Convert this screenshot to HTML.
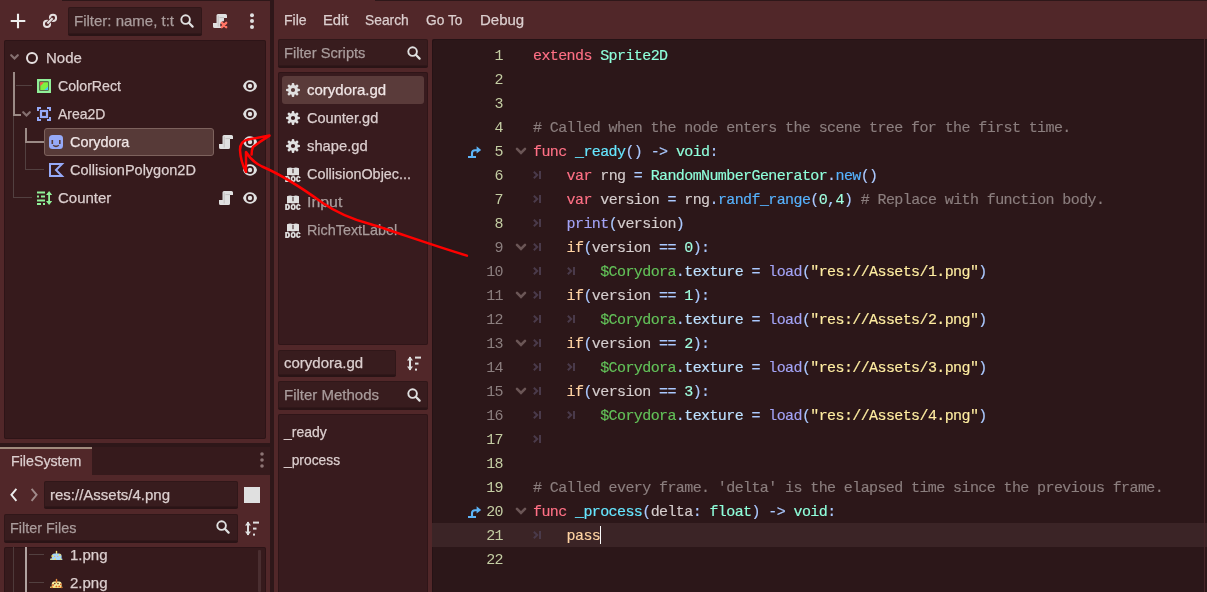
<!DOCTYPE html>
<html><head><meta charset="utf-8">
<style>
*{margin:0;padding:0;box-sizing:border-box}
html,body{width:1207px;height:592px;overflow:hidden;background:#512729}
body{position:relative;will-change:transform;font-family:"Liberation Sans",sans-serif;font-size:15px;color:#dccfcf}
.a{position:absolute}
.sep{background:#2e1719}
.panel{position:absolute;background:#361a1c;border-radius:2px;box-shadow:inset 0 0 0 1px rgba(20,5,6,0.25)}
.field{position:absolute;background:#381c1e;border-radius:2px;border-bottom:2px solid #2a1416;box-shadow:inset 0 0 0 1px rgba(20,5,6,0.2)}
.t{position:absolute;white-space:pre;line-height:16px;-webkit-text-stroke:0.25px currentColor}
.ph{color:#a99c9c}
svg{position:absolute;overflow:visible}
/* code */
.code{position:absolute;left:432px;top:39px;width:775px;height:553px;background:#2c1719;border-radius:2px 0 0 0;box-shadow:inset 1px 1px 0 rgba(10,2,3,0.2)}
.ln{position:absolute;left:0;width:71px;text-align:right;font-family:"Liberation Mono",monospace;font-size:15px;letter-spacing:-0.6px;line-height:24px;height:24px}
.cl{position:absolute;left:101px;font-family:"Liberation Mono",monospace;font-size:15px;letter-spacing:-0.6px;line-height:24px;height:24px;white-space:pre;color:#d5cdcd;-webkit-text-stroke:0.15px currentColor}
.safe{color:#c4cda3}
.uns{color:#8c7f7f}
.kw{color:#ff7085}.ty{color:#8fffdb}.cm{color:#8b7e7e}.fd{color:#66e6ff}.sy{color:#abc9ff}.fn{color:#57b3ff}.nu{color:#a1ffe0}.gf{color:#a3a3f5}.cf{color:#ffd3a3}.nr{color:#63c259}.mv{color:#bce0ff}.st{color:#ffeda1}
</style></head><body>

<svg width="0" height="0" style="position:absolute">
<defs>
<mask id="gm"><rect x="-1" y="-1" width="16" height="16" fill="#fff"/><circle cx="7" cy="7" r="2.1" fill="#000"/></mask>
<mask id="em"><rect x="-1" y="-1" width="16" height="14" fill="#fff"/><circle cx="7" cy="6" r="3.9" fill="#000"/></mask>
<symbol id="gear" viewBox="0 0 14 14"><g fill="#e0e0e0" mask="url(#gm)"><circle cx="7" cy="7" r="5"/><rect x="5.7" y="0" width="2.6" height="14" rx="1"/><rect x="5.7" y="0" width="2.6" height="14" rx="1" transform="rotate(45 7 7)"/><rect x="5.7" y="0" width="2.6" height="14" rx="1" transform="rotate(90 7 7)"/><rect x="5.7" y="0" width="2.6" height="14" rx="1" transform="rotate(135 7 7)"/></g></symbol>
<symbol id="eye" viewBox="0 0 14 12"><path d="M0 6 C2 -1.6 12 -1.6 14 6 C12 13.6 2 13.6 0 6Z" fill="#e0e0e0" mask="url(#em)"/><circle cx="7" cy="6" r="2.2" fill="#e0e0e0"/></symbol>
<symbol id="scr" viewBox="0 0 14 14"><path d="M5 0 H12.5 Q14 0 14 1.5 V4 H11 V12.5 Q11 14 9.5 14 H1.5 Q0 14 0 12.5 V9 H3.5 V1.5 Q3.5 0 5 0Z" fill="#e0e0e0"/><path d="M5.2 1.5 V12.5 M6.5 3.6 H11" stroke="#c4c0c0" stroke-width="1"/></symbol>
<symbol id="srch" viewBox="0 0 14 14"><circle cx="5.6" cy="5.6" r="4.3" fill="none" stroke="#e0e0e0" stroke-width="1.9"/><path d="M8.8 8.8 L12.6 12.6" stroke="#e0e0e0" stroke-width="2.2" stroke-linecap="round"/></symbol>
<symbol id="doc" viewBox="0 0 16 15"><path d="M2 1.3 Q5 -0.2 7.6 1 L8 1.6 L8.4 1 Q11 -0.2 14 1.3 V8.6 Q11 7.4 8.6 8.6 H7.4 Q5 7.4 2 8.6Z" fill="#e0e0e0"/><path d="M8 2 V6.2" stroke="#361a1c" stroke-width="1"/><path fill-rule="evenodd" fill="#e0e0e0" d="M0.2 9 H2.6 Q5 9 5 12 Q5 15 2.6 15 H0.2Z M1.9 10.6 V13.4 H2.4 Q3.2 13.4 3.2 12 Q3.2 10.6 2.4 10.6Z M8.2 9 A2.6 3 0 1 1 8.2 15 A2.6 3 0 1 1 8.2 9Z M8.2 10.6 A0.9 1.4 0 1 0 8.2 13.4 A0.9 1.4 0 1 0 8.2 10.6Z M15.8 10.8 Q15 9 13.4 9 Q11 9 11 12 Q11 15 13.4 15 Q15 15 15.8 13.2 L14.3 12.8 Q14 13.4 13.4 13.4 Q12.7 13.4 12.7 12 Q12.7 10.6 13.4 10.6 Q14 10.6 14.3 11.2Z"/></symbol>
<symbol id="sort" viewBox="0 0 15 15"><path d="M3 1 V14" stroke="#e0e0e0" stroke-width="2"/><path d="M0 4.5 L3 0.5 L6 4.5Z M0 10.5 L3 14.5 L6 10.5Z" fill="#e0e0e0"/><rect x="8" y="0.6" width="6" height="2" fill="#e0e0e0"/><rect x="8" y="6.6" width="3.5" height="2" fill="#e0e0e0"/><rect x="8" y="12.6" width="2" height="2" fill="#e0e0e0"/></symbol>
</defs></svg>

<!-- top lines -->
<div class="a sep" style="left:62px;top:0;width:208px;height:1px"></div>
<div class="a sep" style="left:375px;top:0;width:832px;height:1px"></div>
<!-- vertical separator -->
<div class="a sep" style="left:270px;top:0;width:4px;height:592px"></div>
<!-- horizontal separator left -->
<div class="a sep" style="left:0;top:443px;width:270px;height:4px"></div>

<!-- ===== Scene dock ===== -->
<div class="field" style="left:68px;top:7px;width:134px;height:29px"></div>
<div class="t ph" style="left:74px;top:13px">Filter: name, t:t</div>

<div class="panel" style="left:4px;top:40px;width:262px;height:399px"></div>

<div class="t" style="left:46px;top:50px">Node</div>
<div class="t" style="left:58px;top:78px;transform:scaleX(0.945);transform-origin:0 0">ColorRect</div>
<div class="t" style="left:58px;top:106px;transform:scaleX(0.933);transform-origin:0 0">Area2D</div>
<div class="a" style="left:44px;top:128px;width:170px;height:28px;background:#573a38;border:1px solid #7d625d;border-radius:3px"></div>
<div class="t" style="left:70px;top:134px;color:#f0e6e6;transform:scaleX(0.961);transform-origin:0 0">Corydora</div>
<div class="t" style="left:70px;top:162px;transform:scaleX(0.968);transform-origin:0 0">CollisionPolygon2D</div>
<div class="t" style="left:58px;top:190px">Counter</div>

<!-- ===== FileSystem dock ===== -->
<div class="a" style="left:92px;top:447px;width:178px;height:28px;background:#361a1c"></div>
<div class="a" style="left:0;top:447px;width:92px;height:2px;background:#a18b7d"></div>
<div class="t" style="left:11px;top:453px;transform:scaleX(0.948);transform-origin:0 0">FileSystem</div>

<div class="field" style="left:44px;top:481px;width:194px;height:28px"></div>
<div class="t" style="left:50px;top:487px">res://Assets/4.png</div>
<div class="field" style="left:4px;top:514px;width:234px;height:29px"></div>
<div class="t ph" style="left:10px;top:520px;transform:scaleX(0.959);transform-origin:0 0">Filter Files</div>
<div class="panel" style="left:4px;top:547px;width:262px;height:50px"></div>
<div class="t" style="left:70px;top:547px">1.png</div>
<div class="t" style="left:70px;top:575px">2.png</div>

<!-- ===== Script panel ===== -->
<div class="t" style="left:284px;top:12px;transform:scaleX(0.939);transform-origin:0 0">File</div>
<div class="t" style="left:323px;top:12px;transform:scaleX(0.984);transform-origin:0 0">Edit</div>
<div class="t" style="left:365px;top:12px;transform:scaleX(0.921);transform-origin:0 0">Search</div>
<div class="t" style="left:426px;top:12px;transform:scaleX(0.917);transform-origin:0 0">Go To</div>
<div class="t" style="left:480px;top:12px">Debug</div>

<div class="field" style="left:278px;top:39px;width:150px;height:29px"></div>
<div class="t ph" style="left:284px;top:45px;transform:scaleX(0.977);transform-origin:0 0">Filter Scripts</div>
<div class="panel" style="left:278px;top:72px;width:150px;height:273px;background:#381b1e"></div>
<div class="a" style="left:282px;top:76px;width:142px;height:28px;background:#5a3b3a;border-radius:3px"></div>
<div class="t" style="left:307px;top:82px;color:#f0e6e6">corydora.gd</div>
<div class="t" style="left:307px;top:110px;transform:scaleX(0.971);transform-origin:0 0">Counter.gd</div>
<div class="t" style="left:307px;top:138px;transform:scaleX(0.984);transform-origin:0 0">shape.gd</div>
<div class="t" style="left:307px;top:166px;transform:scaleX(0.96);transform-origin:0 0">CollisionObjec...</div>
<div class="t ph" style="left:307px;top:194px;transform:scaleX(1.06);transform-origin:0 0">Input</div>
<div class="t ph" style="left:307px;top:222px;transform:scaleX(0.957);transform-origin:0 0">RichTextLabel</div>

<div class="field" style="left:278px;top:350px;width:118px;height:27px"></div>
<div class="t" style="left:284px;top:355px">corydora.gd</div>
<div class="field" style="left:278px;top:381px;width:150px;height:29px"></div>
<div class="t ph" style="left:284px;top:387px">Filter Methods</div>
<div class="panel" style="left:278px;top:414px;width:150px;height:190px;background:#381b1e"></div>
<div class="t" style="left:284px;top:424px;transform:scaleX(0.934);transform-origin:0 0">_ready</div>
<div class="t" style="left:284px;top:452px;transform:scaleX(0.921);transform-origin:0 0">_process</div>


<!-- toolbar icons -->
<svg style="left:10px;top:13px" width="16" height="16"><path d="M8 0.7 V15.3 M0.7 8 H15.3" stroke="#eeeeee" stroke-width="2.1"/></svg>
<svg style="left:42px;top:13px" width="16" height="16"><g fill="none" stroke="#e6e0e0" stroke-width="2"><circle cx="5" cy="10.9" r="3.1"/><circle cx="11" cy="4.9" r="3.1"/></g><path d="M5.2 10.7 L10.8 5.1" stroke="#5b3335" stroke-width="3.6"/><path d="M5.4 10.5 L10.6 5.3" stroke="#e6e0e0" stroke-width="2"/></svg>
<svg style="left:180px;top:14px" width="14" height="14"><use href="#srch"/></svg>
<svg style="left:213px;top:14px" width="14" height="14"><use href="#scr"/></svg>
<svg style="left:220px;top:21px" width="8" height="8"><path d="M1.5 1.5 L6.5 6.5 M6.5 1.5 L1.5 6.5" stroke="#512729" stroke-width="4.6"/><path d="M1.8 1.8 L6.2 6.2 M6.2 1.8 L1.8 6.2" stroke="#ff7464" stroke-width="2.4" stroke-linecap="round"/></svg>
<svg style="left:249px;top:13px" width="6" height="16"><circle cx="3" cy="2.2" r="2" fill="#e0e0e0"/><circle cx="3" cy="8" r="2" fill="#e0e0e0"/><circle cx="3" cy="14" r="2" fill="#e0e0e0"/></svg>

<!-- tree lines -->
<div class="a" style="left:13px;top:72px;width:2px;height:44px;background:#9b8a86"></div>
<div class="a" style="left:13px;top:114px;width:8px;height:2px;background:#9b8a86"></div>
<div class="a" style="left:16px;top:85px;width:16px;height:1px;background:#524040"></div>
<div class="a" style="left:13px;top:116px;width:1px;height:82px;background:#524040"></div>
<div class="a" style="left:13px;top:197px;width:19px;height:1px;background:#524040"></div>
<div class="a" style="left:25px;top:128px;width:2px;height:15px;background:#9b8a86"></div>
<div class="a" style="left:25px;top:141px;width:19px;height:2px;background:#9b8a86"></div>
<div class="a" style="left:25px;top:143px;width:1px;height:27px;background:#524040"></div>
<div class="a" style="left:25px;top:169px;width:19px;height:1px;background:#524040"></div>

<!-- tree icons -->
<svg style="left:10px;top:54px" width="9" height="6"><path d="M1.2 1.2 L4.5 4.5 L7.8 1.2" stroke="#857070" stroke-width="2.2" stroke-linecap="round" fill="none"/></svg>
<svg style="left:25px;top:51px" width="14" height="14"><circle cx="7" cy="7" r="5" fill="none" stroke="#e6e0e0" stroke-width="2"/></svg>
<svg style="left:37px;top:79px" width="14" height="14"><rect x="0" y="0" width="14" height="14" fill="#90f098"/><rect x="2.4" y="2.4" width="9.2" height="9.2" fill="#361a1c"/><rect x="3.2" y="3.2" width="7.8" height="7.8" fill="#80f040"/><path d="M3.2 3.2 H7 L3.2 7Z" fill="#ff4d50"/><path d="M11 11 H7.4 L11 7.4Z" fill="#40c8ff"/></svg>
<svg style="left:22px;top:111px" width="9" height="6"><path d="M1.2 1.2 L4.5 4.5 L7.8 1.2" stroke="#857070" stroke-width="2.2" stroke-linecap="round" fill="none"/></svg>
<svg style="left:37px;top:107px" width="14" height="14"><g fill="#96aaf8"><path d="M0 0 H4 V2 H2 V4 H0Z M14 0 H10 V2 H12 V4 H14Z M0 14 H4 V12 H2 V10 H0Z M14 14 H10 V12 H12 V10 H14Z"/></g><rect x="4" y="4" width="6" height="6" fill="none" stroke="#96aaf8" stroke-width="2.2"/></svg>
<svg style="left:49px;top:135px" width="14" height="14"><rect x="0" y="0" width="14" height="14" rx="3.5" fill="#96aaf8"/><rect x="2.5" y="5" width="1.6" height="4" fill="#573a38"/><rect x="10" y="5" width="1.6" height="4" fill="#573a38"/><path d="M4.2 10.2 Q7 12.6 9.8 10.2" stroke="#573a38" stroke-width="1.5" fill="none"/></svg>
<svg style="left:49px;top:163px" width="15" height="14"><path d="M1 1 H13 L7 7 L13 13 H1Z" fill="none" stroke="#96aaf8" stroke-width="2"/></svg>
<svg style="left:37px;top:191px" width="16" height="14"><g fill="#90f098"><rect x="0" y="0.5" width="8" height="2"/><rect x="0" y="4.5" width="2" height="2"/><rect x="4" y="4.5" width="4" height="2"/><rect x="0" y="8.5" width="8" height="2"/><rect x="0" y="12" width="4" height="2"/><rect x="6" y="12" width="2" height="2"/><rect x="11.2" y="2" width="1.8" height="10"/><path d="M9 4 L12.1 0 L15.2 4Z M9 10 L12.1 14 L15.2 10Z"/></g></svg>
<svg style="left:219px;top:135px" width="14" height="14"><use href="#scr"/></svg>
<svg style="left:219px;top:191px" width="14" height="14"><use href="#scr"/></svg>
<svg style="left:243px;top:80px" width="14" height="12"><use href="#eye"/></svg>
<svg style="left:243px;top:108px" width="14" height="12"><use href="#eye"/></svg>
<svg style="left:243px;top:136px" width="14" height="12"><use href="#eye"/></svg>
<svg style="left:243px;top:164px" width="14" height="12"><use href="#eye"/></svg>
<svg style="left:243px;top:192px" width="14" height="12"><use href="#eye"/></svg>

<!-- filesystem icons -->
<svg style="left:259px;top:452px" width="6" height="16"><circle cx="3" cy="2" r="1.8" fill="#8c7474"/><circle cx="3" cy="8" r="1.8" fill="#8c7474"/><circle cx="3" cy="14" r="1.8" fill="#8c7474"/></svg>
<svg style="left:10px;top:488px" width="8" height="14"><path d="M6.4 0.8 L1.4 6.8 L6.4 12.8" stroke="#eeeeee" stroke-width="1.9" fill="none"/></svg>
<svg style="left:30px;top:488px" width="8" height="14"><path d="M1.6 0.8 L6.6 6.8 L1.6 12.8" stroke="#a08a8a" stroke-width="1.9" fill="none"/></svg>
<div class="a" style="left:244px;top:487px;width:16px;height:16px;background:#e0e0e0"></div>
<svg style="left:216px;top:520px" width="14" height="14"><use href="#srch"/></svg>
<svg style="left:245px;top:521px" width="15" height="15"><use href="#sort"/></svg>
<div class="a" style="left:13px;top:547px;width:1px;height:45px;background:#4e3a3a"></div>
<div class="a" style="left:25px;top:547px;width:2px;height:45px;background:#b0a2a0"></div>
<div class="a" style="left:29px;top:554px;width:15px;height:1px;background:#524040"></div>
<div class="a" style="left:29px;top:582px;width:15px;height:1px;background:#524040"></div>
<div class="a" style="left:258px;top:550px;width:3px;height:42px;background:#4a2e30;border-radius:1px"></div>
<svg style="left:50px;top:550px" width="13" height="11"><rect x="5.8" y="0.8" width="1.4" height="3.6" rx="0.7" fill="#f4e070"/><rect x="1.8" y="3.6" width="9.8" height="6.2" rx="2.6" fill="#a8d8f8"/><rect x="0" y="8.6" width="12.5" height="1.4" rx="0.7" fill="#a8d8f8"/><circle cx="2.4" cy="6" r="1" fill="#f0e060"/><circle cx="9.8" cy="5" r="1.1" fill="#f0e060"/><circle cx="5.2" cy="9.2" r="0.9" fill="#f0e060"/><circle cx="10.6" cy="9.3" r="0.8" fill="#f0e060"/><circle cx="1.6" cy="9.2" r="0.8" fill="#f0e060"/><circle cx="4.8" cy="6.4" r="0.55" fill="#e0a090"/><circle cx="7.8" cy="6.4" r="0.55" fill="#e0a090"/></svg>
<svg style="left:50px;top:578px" width="13" height="11"><rect x="5.8" y="0.8" width="1.4" height="3.6" rx="0.7" fill="#e89040"/><rect x="1.8" y="3.6" width="9.8" height="6.2" rx="2.6" fill="#f8f0a0"/><rect x="0" y="8.6" width="12.5" height="1.4" rx="0.7" fill="#f0e080"/><circle cx="4.8" cy="5.6" r="0.8" fill="#603018"/><circle cx="8" cy="5.6" r="0.8" fill="#603018"/><circle cx="3" cy="7" r="0.9" fill="#e06020"/><circle cx="6.4" cy="8.4" r="0.9" fill="#e06020"/><circle cx="9.2" cy="8.4" r="0.9" fill="#e06020"/><circle cx="10.8" cy="6.4" r="0.8" fill="#e06020"/><circle cx="6.4" cy="3.9" r="0.8" fill="#e06020"/><circle cx="2" cy="9.4" r="0.8" fill="#e06020"/><circle cx="11.4" cy="9.4" r="0.8" fill="#e06020"/></svg>

<!-- script list icons -->
<svg style="left:286px;top:83px" width="14" height="14"><use href="#gear"/></svg>
<svg style="left:286px;top:111px" width="14" height="14"><use href="#gear"/></svg>
<svg style="left:286px;top:139px" width="14" height="14"><use href="#gear"/></svg>
<svg style="left:285px;top:167px" width="16" height="15"><use href="#doc"/></svg>
<svg style="left:285px;top:195px" width="16" height="15"><use href="#doc"/></svg>
<svg style="left:285px;top:223px" width="16" height="15"><use href="#doc"/></svg>
<svg style="left:407px;top:46px" width="14" height="14"><use href="#srch"/></svg>
<svg style="left:407px;top:356px" width="15" height="15"><use href="#sort"/></svg>
<svg style="left:407px;top:388px" width="14" height="14"><use href="#srch"/></svg>

<!-- ===== Code editor ===== -->
<div class="code">
<!--CODE-->
<div class="a" style="left:0;top:484px;width:775px;height:24px;background:#3b2426"></div>
<div class="ln safe" style="top:6px">1</div>
<div class="cl" style="top:6px"><span class="kw">extends</span> <span class="ty">Sprite2D</span></div>
<div class="ln safe" style="top:30px">2</div>
<div class="ln safe" style="top:54px">3</div>
<div class="ln safe" style="top:78px">4</div>
<div class="cl" style="top:78px"><span class="cm"># Called when the node enters the scene tree for the first time.</span></div>
<div class="ln safe" style="top:102px">5</div>
<div class="cl" style="top:102px"><span class="kw">func</span> <span class="fd">_ready</span><span class="sy">()</span> <span class="sy">-&gt;</span> <span class="ty">void</span><span class="sy">:</span></div>
<svg style="left:84px;top:108px" width="11" height="8"><path d="M1 1.9 L5 5.9 L9 1.9" stroke="#6b5656" stroke-width="2.6" stroke-linecap="round" fill="none"/></svg>
<svg style="left:36px;top:106.8px" width="14" height="13"><path d="M0 11 H8 M4 11 V7 Q4 4.2 7 4.2 H9" stroke="#5cb4f7" stroke-width="2.1" fill="none"/><path d="M8.6 0.3 L13.2 3.9 L8.6 7.6 Z" fill="#5cb4f7"/></svg>
<div class="ln safe" style="top:126px">6</div>
<div class="cl" style="top:126px">    <span class="kw">var</span> rng <span class="sy">=</span> <span class="ty">RandomNumberGenerator</span><span class="sy">.</span><span class="fn">new</span><span class="sy">()</span></div>
<svg class="tm" style="left:101.0px;top:132px" width="9" height="8"><path d="M0.8 0.8 L4.2 4 L0.8 7.2" stroke="#4a3a4a" stroke-width="2" fill="none"/><rect x="6" y="0" width="2" height="8" fill="#4a3a4a"/></svg>
<div class="ln safe" style="top:150px">7</div>
<div class="cl" style="top:150px">    <span class="kw">var</span> version <span class="sy">=</span> rng<span class="sy">.</span><span class="fn">randf_range</span><span class="sy">(</span><span class="nu">0</span><span class="sy">,</span><span class="nu">4</span><span class="sy">)</span> <span class="cm"># Replace with function body.</span></div>
<svg class="tm" style="left:101.0px;top:156px" width="9" height="8"><path d="M0.8 0.8 L4.2 4 L0.8 7.2" stroke="#4a3a4a" stroke-width="2" fill="none"/><rect x="6" y="0" width="2" height="8" fill="#4a3a4a"/></svg>
<div class="ln safe" style="top:174px">8</div>
<div class="cl" style="top:174px">    <span class="gf">print</span><span class="sy">(</span>version<span class="sy">)</span></div>
<svg class="tm" style="left:101.0px;top:180px" width="9" height="8"><path d="M0.8 0.8 L4.2 4 L0.8 7.2" stroke="#4a3a4a" stroke-width="2" fill="none"/><rect x="6" y="0" width="2" height="8" fill="#4a3a4a"/></svg>
<div class="ln uns" style="top:198px">9</div>
<div class="cl" style="top:198px">    <span class="cf">if</span><span class="sy">(</span>version <span class="sy">==</span> <span class="nu">0</span><span class="sy">):</span></div>
<svg style="left:84px;top:204px" width="11" height="8"><path d="M1 1.9 L5 5.9 L9 1.9" stroke="#6b5656" stroke-width="2.6" stroke-linecap="round" fill="none"/></svg>
<svg class="tm" style="left:101.0px;top:204px" width="9" height="8"><path d="M0.8 0.8 L4.2 4 L0.8 7.2" stroke="#4a3a4a" stroke-width="2" fill="none"/><rect x="6" y="0" width="2" height="8" fill="#4a3a4a"/></svg>
<div class="ln uns" style="top:222px">10</div>
<div class="cl" style="top:222px">        <span class="nr">$Corydora</span><span class="sy">.</span><span class="mv">texture</span> <span class="sy">=</span> <span class="gf">load</span><span class="sy">(</span><span class="st">&quot;res://Assets/1.png&quot;</span><span class="sy">)</span></div>
<svg class="tm" style="left:101.0px;top:228px" width="9" height="8"><path d="M0.8 0.8 L4.2 4 L0.8 7.2" stroke="#4a3a4a" stroke-width="2" fill="none"/><rect x="6" y="0" width="2" height="8" fill="#4a3a4a"/></svg>
<svg class="tm" style="left:134.6px;top:228px" width="9" height="8"><path d="M0.8 0.8 L4.2 4 L0.8 7.2" stroke="#4a3a4a" stroke-width="2" fill="none"/><rect x="6" y="0" width="2" height="8" fill="#4a3a4a"/></svg>
<div class="ln uns" style="top:246px">11</div>
<div class="cl" style="top:246px">    <span class="cf">if</span><span class="sy">(</span>version <span class="sy">==</span> <span class="nu">1</span><span class="sy">):</span></div>
<svg style="left:84px;top:252px" width="11" height="8"><path d="M1 1.9 L5 5.9 L9 1.9" stroke="#6b5656" stroke-width="2.6" stroke-linecap="round" fill="none"/></svg>
<svg class="tm" style="left:101.0px;top:252px" width="9" height="8"><path d="M0.8 0.8 L4.2 4 L0.8 7.2" stroke="#4a3a4a" stroke-width="2" fill="none"/><rect x="6" y="0" width="2" height="8" fill="#4a3a4a"/></svg>
<div class="ln uns" style="top:270px">12</div>
<div class="cl" style="top:270px">        <span class="nr">$Corydora</span><span class="sy">.</span><span class="mv">texture</span> <span class="sy">=</span> <span class="gf">load</span><span class="sy">(</span><span class="st">&quot;res://Assets/2.png&quot;</span><span class="sy">)</span></div>
<svg class="tm" style="left:101.0px;top:276px" width="9" height="8"><path d="M0.8 0.8 L4.2 4 L0.8 7.2" stroke="#4a3a4a" stroke-width="2" fill="none"/><rect x="6" y="0" width="2" height="8" fill="#4a3a4a"/></svg>
<svg class="tm" style="left:134.6px;top:276px" width="9" height="8"><path d="M0.8 0.8 L4.2 4 L0.8 7.2" stroke="#4a3a4a" stroke-width="2" fill="none"/><rect x="6" y="0" width="2" height="8" fill="#4a3a4a"/></svg>
<div class="ln uns" style="top:294px">13</div>
<div class="cl" style="top:294px">    <span class="cf">if</span><span class="sy">(</span>version <span class="sy">==</span> <span class="nu">2</span><span class="sy">):</span></div>
<svg style="left:84px;top:300px" width="11" height="8"><path d="M1 1.9 L5 5.9 L9 1.9" stroke="#6b5656" stroke-width="2.6" stroke-linecap="round" fill="none"/></svg>
<svg class="tm" style="left:101.0px;top:300px" width="9" height="8"><path d="M0.8 0.8 L4.2 4 L0.8 7.2" stroke="#4a3a4a" stroke-width="2" fill="none"/><rect x="6" y="0" width="2" height="8" fill="#4a3a4a"/></svg>
<div class="ln uns" style="top:318px">14</div>
<div class="cl" style="top:318px">        <span class="nr">$Corydora</span><span class="sy">.</span><span class="mv">texture</span> <span class="sy">=</span> <span class="gf">load</span><span class="sy">(</span><span class="st">&quot;res://Assets/3.png&quot;</span><span class="sy">)</span></div>
<svg class="tm" style="left:101.0px;top:324px" width="9" height="8"><path d="M0.8 0.8 L4.2 4 L0.8 7.2" stroke="#4a3a4a" stroke-width="2" fill="none"/><rect x="6" y="0" width="2" height="8" fill="#4a3a4a"/></svg>
<svg class="tm" style="left:134.6px;top:324px" width="9" height="8"><path d="M0.8 0.8 L4.2 4 L0.8 7.2" stroke="#4a3a4a" stroke-width="2" fill="none"/><rect x="6" y="0" width="2" height="8" fill="#4a3a4a"/></svg>
<div class="ln uns" style="top:342px">15</div>
<div class="cl" style="top:342px">    <span class="cf">if</span><span class="sy">(</span>version <span class="sy">==</span> <span class="nu">3</span><span class="sy">):</span></div>
<svg style="left:84px;top:348px" width="11" height="8"><path d="M1 1.9 L5 5.9 L9 1.9" stroke="#6b5656" stroke-width="2.6" stroke-linecap="round" fill="none"/></svg>
<svg class="tm" style="left:101.0px;top:348px" width="9" height="8"><path d="M0.8 0.8 L4.2 4 L0.8 7.2" stroke="#4a3a4a" stroke-width="2" fill="none"/><rect x="6" y="0" width="2" height="8" fill="#4a3a4a"/></svg>
<div class="ln uns" style="top:366px">16</div>
<div class="cl" style="top:366px">        <span class="nr">$Corydora</span><span class="sy">.</span><span class="mv">texture</span> <span class="sy">=</span> <span class="gf">load</span><span class="sy">(</span><span class="st">&quot;res://Assets/4.png&quot;</span><span class="sy">)</span></div>
<svg class="tm" style="left:101.0px;top:372px" width="9" height="8"><path d="M0.8 0.8 L4.2 4 L0.8 7.2" stroke="#4a3a4a" stroke-width="2" fill="none"/><rect x="6" y="0" width="2" height="8" fill="#4a3a4a"/></svg>
<svg class="tm" style="left:134.6px;top:372px" width="9" height="8"><path d="M0.8 0.8 L4.2 4 L0.8 7.2" stroke="#4a3a4a" stroke-width="2" fill="none"/><rect x="6" y="0" width="2" height="8" fill="#4a3a4a"/></svg>
<div class="ln safe" style="top:390px">17</div>
<svg class="tm" style="left:101.0px;top:396px" width="9" height="8"><path d="M0.8 0.8 L4.2 4 L0.8 7.2" stroke="#4a3a4a" stroke-width="2" fill="none"/><rect x="6" y="0" width="2" height="8" fill="#4a3a4a"/></svg>
<div class="ln safe" style="top:414px">18</div>
<div class="ln safe" style="top:438px">19</div>
<div class="cl" style="top:438px"><span class="cm"># Called every frame. &#x27;delta&#x27; is the elapsed time since the previous frame.</span></div>
<div class="ln safe" style="top:462px">20</div>
<div class="cl" style="top:462px"><span class="kw">func</span> <span class="fd">_process</span><span class="sy">(</span>delta<span class="sy">:</span> <span class="ty">float</span><span class="sy">)</span> <span class="sy">-&gt;</span> <span class="ty">void</span><span class="sy">:</span></div>
<svg style="left:84px;top:468px" width="11" height="8"><path d="M1 1.9 L5 5.9 L9 1.9" stroke="#6b5656" stroke-width="2.6" stroke-linecap="round" fill="none"/></svg>
<svg style="left:36px;top:466.8px" width="14" height="13"><path d="M0 11 H8 M4 11 V7 Q4 4.2 7 4.2 H9" stroke="#5cb4f7" stroke-width="2.1" fill="none"/><path d="M8.6 0.3 L13.2 3.9 L8.6 7.6 Z" fill="#5cb4f7"/></svg>
<div class="ln safe" style="top:486px">21</div>
<div class="cl" style="top:486px">    <span class="cf">pass</span></div>
<svg class="tm" style="left:101.0px;top:492px" width="9" height="8"><path d="M0.8 0.8 L4.2 4 L0.8 7.2" stroke="#4a3a4a" stroke-width="2" fill="none"/><rect x="6" y="0" width="2" height="8" fill="#4a3a4a"/></svg>
<div class="ln safe" style="top:510px">22</div>
<div class="a" style="left:168.2px;top:487px;width:1px;height:18px;background:#fafafa"></div>
<!--/CODE-->
<div class="a" style="left:772px;top:0;width:1px;height:553px;background:#472629"></div>

</div>


<!-- annotation -->
<svg style="left:0;top:0" width="1207" height="592"><path d="M466.9 255.6 C430 244.5 396 232 370 224 C353 219.5 337 213 322 202.5 C302 188 282 175 262 166.5 C254 162.5 249 157 246 152 L246 172 C243 166 240.5 160 240 150 C240 144 243 140.5 248 139.5 L269.5 135.6 C264 139 258 143 253 147 C252 149 251.6 151 251.6 154.5" fill="none" stroke="#ff0000" stroke-width="2.5" stroke-linecap="round" stroke-linejoin="round"/></svg>
</body></html>
